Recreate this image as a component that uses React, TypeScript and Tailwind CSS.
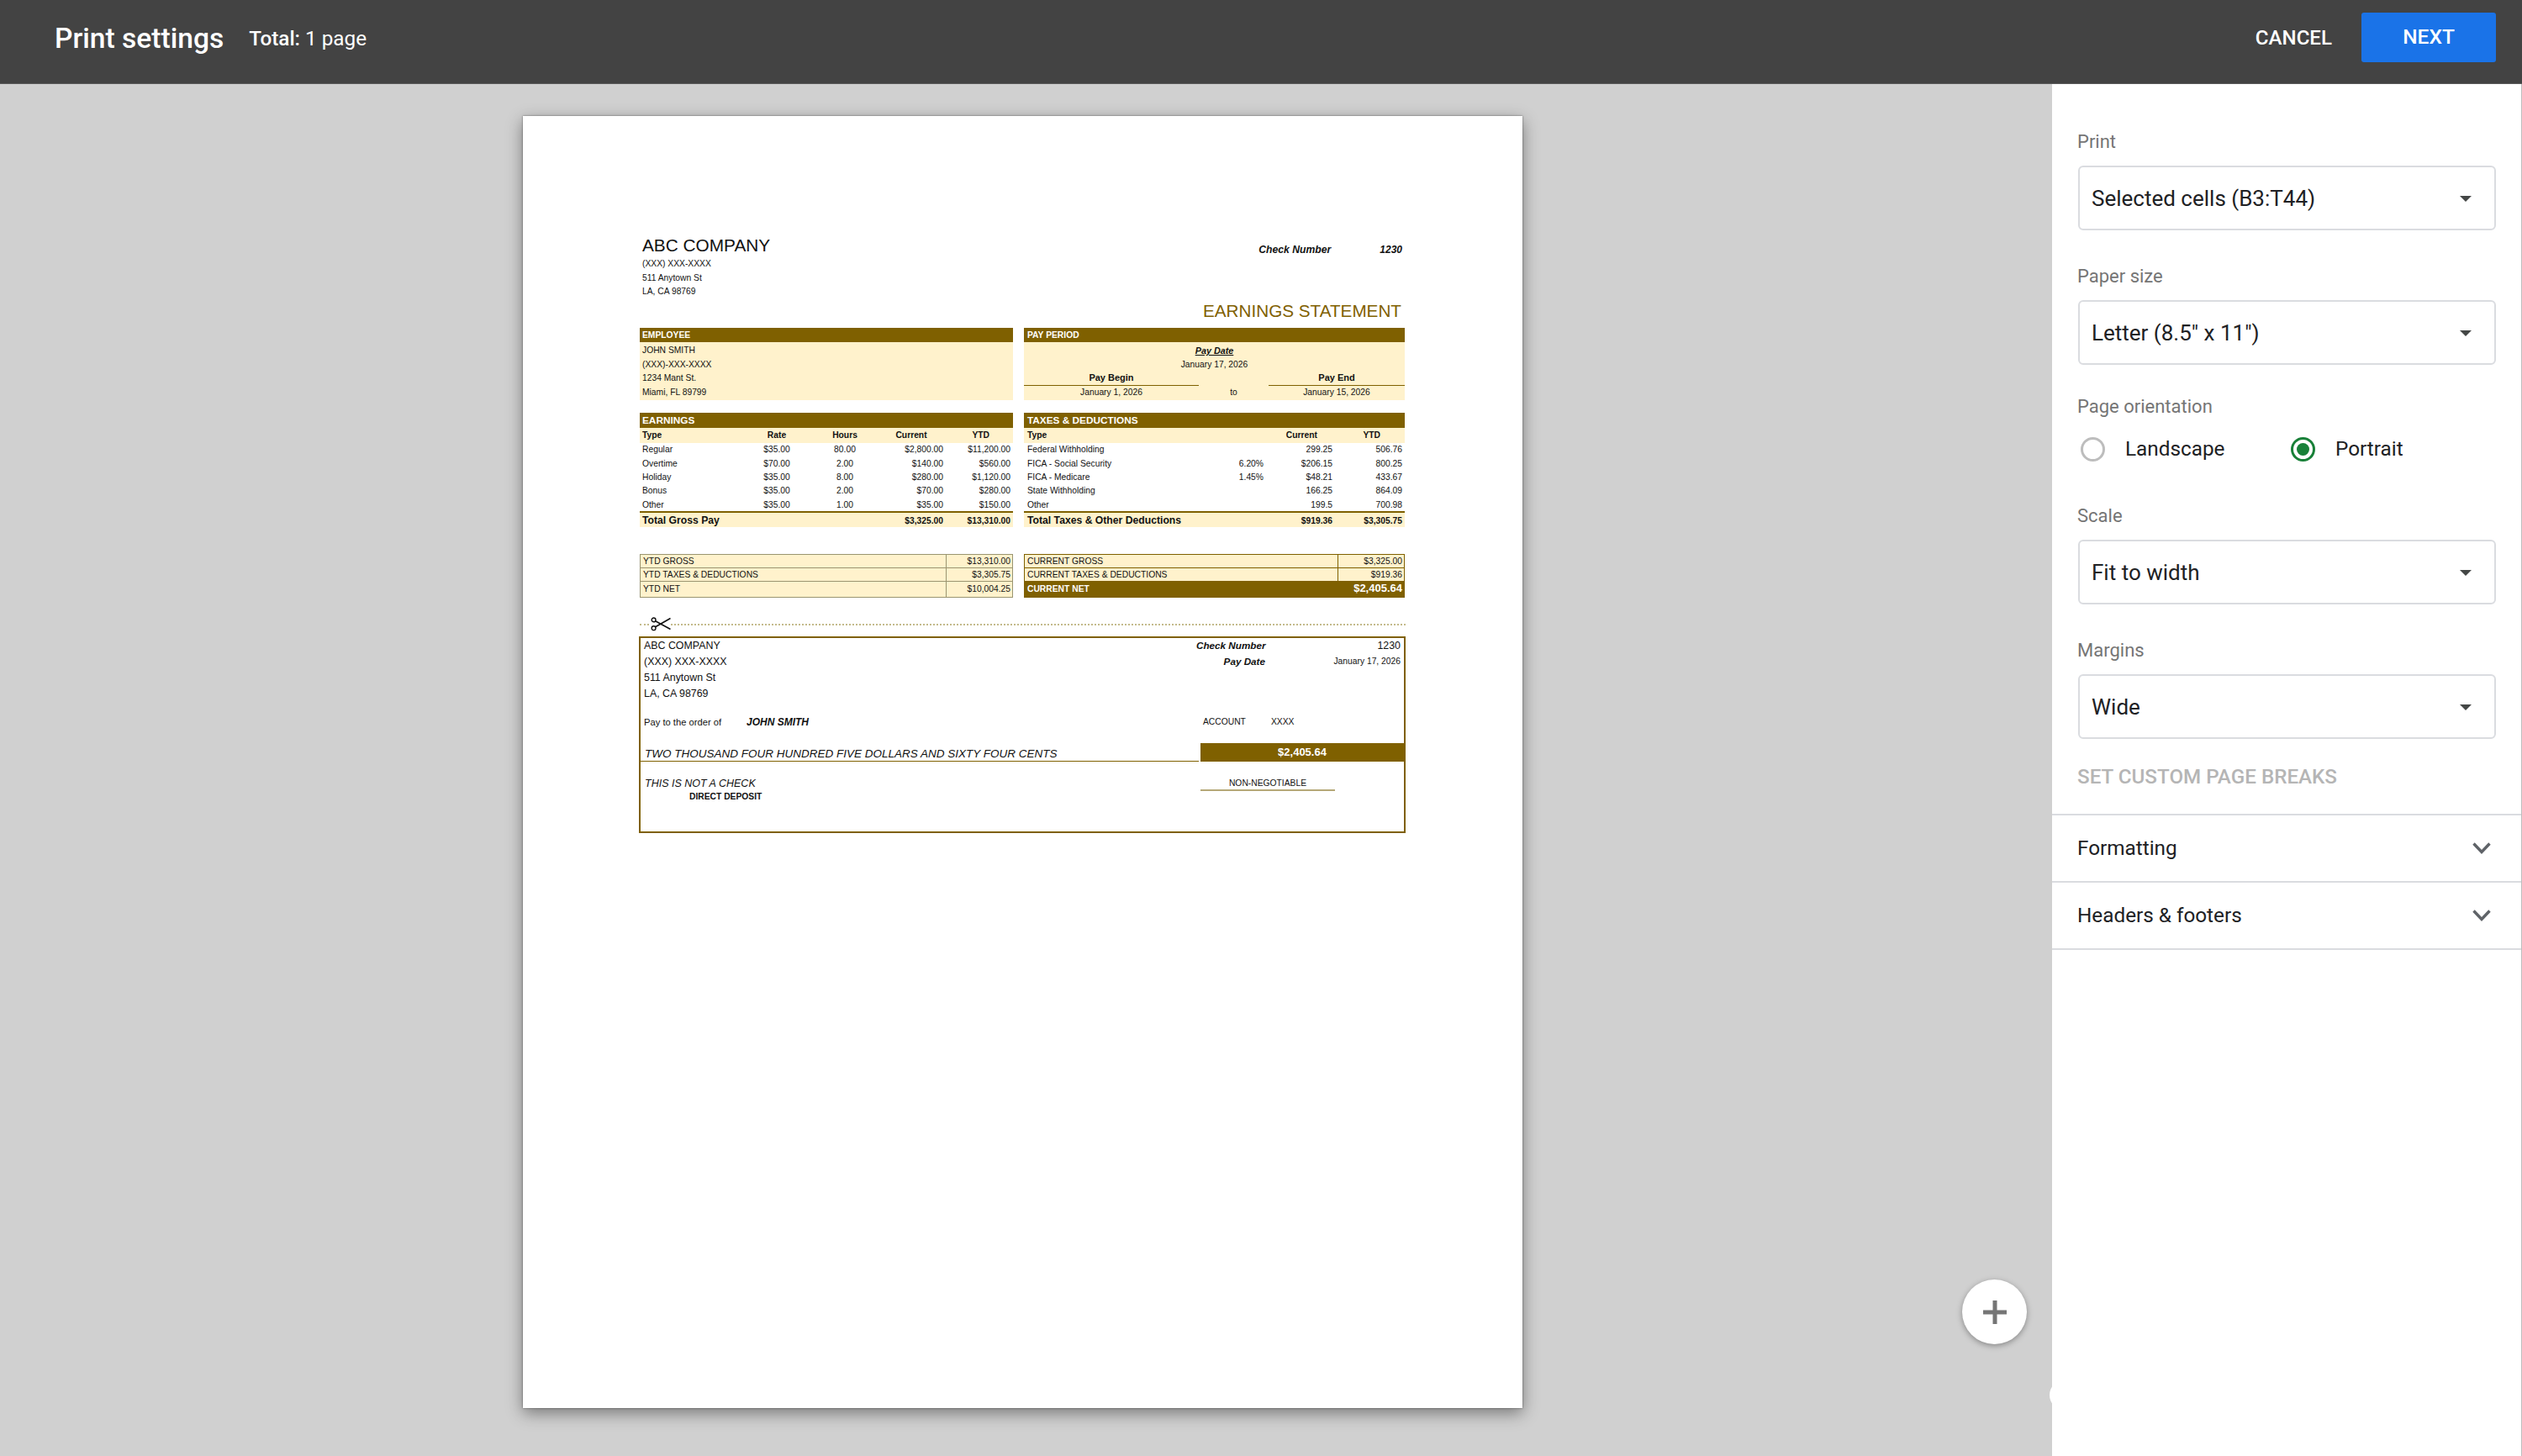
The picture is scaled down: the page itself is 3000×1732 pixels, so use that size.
const BROWN = "bg-[#7f6000]";
const CREAM = "bg-[#fff2cc]";

const earnings = [
  ["Regular", "$35.00", "80.00", "$2,800.00", "$11,200.00"],
  ["Overtime", "$70.00", "2.00", "$140.00", "$560.00"],
  ["Holiday", "$35.00", "8.00", "$280.00", "$1,120.00"],
  ["Bonus", "$35.00", "2.00", "$70.00", "$280.00"],
  ["Other", "$35.00", "1.00", "$35.00", "$150.00"],
];

const taxes = [
  ["Federal Withholding", "", "299.25", "506.76"],
  ["FICA - Social Security", "6.20%", "$206.15", "800.25"],
  ["FICA - Medicare", "1.45%", "$48.21", "433.67"],
  ["State Withholding", "", "166.25", "864.09"],
  ["Other", "", "199.5", "700.98"],
];

function Caret() {
  return (
    <svg width="14" height="7" viewBox="0 0 14 7" className="shrink-0">
      <path d="M0 0h14L7 7z" fill="#444746" />
    </svg>
  );
}

function Field({ label, value, className }: { label: string; value: string; className: string }) {
  return (
    <div className={className}>
      <div className="-ml-px text-[22px] leading-[30px] text-[#757575]">{label}</div>
      <div className="mt-[13px] flex h-[77px] items-center justify-between rounded-[6px] border-2 border-[#dadce0] pl-[14px] pr-[27px] pt-[1px] text-[26px] text-[#202124]">
        <span>{value}</span>
        <Caret />
      </div>
    </div>
  );
}

function Acordeon({ label }: { label: string }) {
  return (
    <div className="flex h-[80px] items-center justify-between border-b-2 border-[#dadce0] pl-[30px] pr-[36px] text-[24.3px] text-[#202124]">
      <span>{label}</span>
      <svg width="22" height="14" viewBox="0 0 22 14" fill="none" stroke="#5f6368" strokeWidth="3.4">
        <path d="M1.5 1.5 11 11.5l9.5-10" />
      </svg>
    </div>
  );
}

function Sidebar() {
  return (
    <aside className="relative z-10 w-[559px] shrink-0 border-r border-[#bdbdbd] bg-white font-['Roboto',sans-serif]">
      <div className="pl-[31px] pr-[30px]">
        <Field className="pt-[54px]" label="Print" value="Selected cells (B3:T44)" />
        <Field className="pt-[40px]" label="Paper size" value="Letter (8.5&quot; x 11&quot;)" />
        <div className="pt-[35px]">
          <div className="-ml-px text-[22px] leading-[30px] text-[#757575]">Page orientation</div>
          <div className="mt-[18px] flex h-[34px] items-center text-[24.3px] text-[#202124]">
            <span className="ml-[3px] h-[29px] w-[29px] rounded-full border-[3px] border-[#bdbdbd]" />
            <span className="ml-[24px] w-[197px]">Landscape</span>
            <span className="flex h-[29px] w-[29px] items-center justify-center rounded-full border-[3px] border-[#188038]">
              <span className="h-[15px] w-[15px] rounded-full bg-[#188038]" />
            </span>
            <span className="ml-[24px]">Portrait</span>
          </div>
        </div>
        <Field className="pt-[48px]" label="Scale" value="Fit to width" />
        <Field className="pt-[40px]" label="Margins" value="Wide" />
        <div className="-ml-px mt-[30px] text-[24.2px] font-medium leading-[30px] text-[#b5b5b5]">SET CUSTOM PAGE BREAKS</div>
      </div>
      <div className="mt-[29px] border-t-2 border-[#dadce0]">
        <Acordeon label="Formatting" />
        <Acordeon label="Headers & footers" />
      </div>
      <div className="absolute left-[-3px] top-[1541px] -z-10 h-[37px] w-[37px] rounded-full bg-white" />
    </aside>
  );
}

function Employee() {
  return (
    <div className="flex gap-[13px]">
      <div className={`w-[444px] ${CREAM} h-[86px]`}>
        <div className={`${BROWN} h-[17px] pl-[3px] text-[10.3px] font-bold leading-[18px] text-white`}>EMPLOYEE</div>
        <div className="pl-[3px] pt-[2px] text-[10.3px] leading-[16.6px] text-[#111]">
          <div>JOHN SMITH</div>
          <div>(XXX)-XXX-XXXX</div>
          <div>1234 Mant St.</div>
          <div>Miami, FL 89799</div>
        </div>
      </div>
      <div className={`w-[453px] ${CREAM} h-[86px] text-[10.3px] text-[#111]`}>
        <div className={`${BROWN} h-[17px] pl-[4px] font-bold leading-[18px] text-white`}>PAY PERIOD</div>
        <div className="pt-[2px] text-center leading-[16.6px]">
          <div className="text-[10.8px] font-bold italic underline">Pay Date</div>
          <div>January 17, 2026</div>
        </div>
        <div className="grid grid-cols-[208px_83px_162px] text-center">
          <div className="h-[17px] border-b border-[#7f6000] text-[11px] font-bold leading-[15px]">Pay Begin</div>
          <div />
          <div className="h-[17px] border-b border-[#7f6000] text-[11px] font-bold leading-[15px]">Pay End</div>
          <div className="leading-[16px]">January 1, 2026</div>
          <div className="leading-[16px]">to</div>
          <div className="leading-[16px]">January 15, 2026</div>
        </div>
      </div>
    </div>
  );
}

function Earnings() {
  const grid = "grid grid-cols-[120px_80px_82px_76px_80px] pl-[3px] pr-[3px]";
  return (
    <div className="w-[444px] text-[10.3px] text-[#111]">
      <div className={`${BROWN} h-[18px] pl-[3px] text-[11.8px] font-bold leading-[18px] text-white`}>EARNINGS</div>
      <div className={`${grid} ${CREAM} h-[18px] items-center font-bold`}>
        <span>Type</span>
        <span className="text-center">Rate</span>
        <span className="text-center">Hours</span>
        <span className="text-center">Current</span>
        <span className="pr-[25px] text-right">YTD</span>
      </div>
      {earnings.map((r) => (
        <div key={r[0]} className={`${grid} h-[16.3px] items-center`}>
          <span>{r[0]}</span>
          <span className="text-center">{r[1]}</span>
          <span className="text-center">{r[2]}</span>
          <span className="text-right">{r[3]}</span>
          <span className="text-right">{r[4]}</span>
        </div>
      ))}
      <div className={`${grid} ${CREAM} h-[19px] items-center border-t-2 border-[#7f6000]`}>
        <span className="col-span-3 text-[12.2px] font-bold">Total Gross Pay</span>
        <span className="text-right font-bold">$3,325.00</span>
        <span className="text-right font-bold">$13,310.00</span>
      </div>
    </div>
  );
}

function Taxes() {
  const grid = "grid grid-cols-[211px_70px_82px_83px] pl-[4px] pr-[3px]";
  return (
    <div className="w-[453px] text-[10.3px] text-[#111]">
      <div className={`${BROWN} h-[18px] pl-[4px] text-[11.8px] font-bold leading-[18px] text-white`}>TAXES &amp; DEDUCTIONS</div>
      <div className={`${grid} ${CREAM} h-[18px] items-center font-bold`}>
        <span className="col-span-2">Type</span>
        <span className="pr-[18px] text-right">Current</span>
        <span className="pr-[26px] text-right">YTD</span>
      </div>
      {taxes.map((r) => (
        <div key={r[0]} className={`${grid} h-[16.3px] items-center`}>
          <span className="whitespace-nowrap">{r[0]}</span>
          <span className="text-right">{r[1]}</span>
          <span className="text-right">{r[2]}</span>
          <span className="text-right">{r[3]}</span>
        </div>
      ))}
      <div className={`${grid} ${CREAM} h-[19px] items-center border-t-2 border-[#7f6000]`}>
        <span className="col-span-2 text-[12.2px] font-bold">Total Taxes &amp; Other Deductions</span>
        <span className="text-right font-bold">$919.36</span>
        <span className="text-right font-bold">$3,305.75</span>
      </div>
    </div>
  );
}

function Paper() {
  return (
    <div className="h-[1537px] w-[1189px] bg-white pl-[139px] pt-[142px] font-['Liberation_Sans','Arial',sans-serif] shadow-[0_6px_18px_rgba(0,0,0,0.42),0_0_2px_rgba(0,0,0,0.5)]">
      <div className="w-[911px]">
        <div className="flex items-start justify-between pl-[3px]">
          <div>
            <div className="text-[20.8px] leading-[24px] text-[#111]">ABC COMPANY</div>
            <div className="pt-[2px] text-[10.3px] leading-[16.5px] text-[#111]">
              <div>(XXX) XXX-XXXX</div>
              <div>511 Anytown St</div>
              <div>LA, CA 98769</div>
            </div>
          </div>
          <div className="flex pr-[4px] pt-[10px] text-[12.2px] font-bold italic leading-[14px] text-[#111]">
            <span className="w-[144px]">Check Number</span>
            <span className="text-[12px]">1230</span>
          </div>
        </div>
        <div className="pr-[5px] pt-[2px] text-right text-[20.7px] leading-[24px] text-[#7f6000]">EARNINGS STATEMENT</div>
        <div className="pt-[8.5px]">
          <Employee />
        </div>
        <div className="flex gap-[13px] pt-[15px]">
          <Earnings />
          <Taxes />
        </div>
        <div className="flex gap-[13px] pt-[32px] text-[10.3px] text-[#111]">
          <div className={`grid w-[444px] grid-cols-[1fr_78px] ${CREAM} border border-[#9a9570]`}>
            <span className="h-[16px] border-b border-r border-[#9a9570] pl-[3px] leading-[16px]">YTD GROSS</span>
            <span className="h-[16px] border-b border-[#9a9570] pr-[2px] text-right leading-[16px]">$13,310.00</span>
            <span className="h-[16px] border-b border-r border-[#9a9570] pl-[3px] leading-[16px]">YTD TAXES &amp; DEDUCTIONS</span>
            <span className="h-[16px] border-b border-[#9a9570] pr-[2px] text-right leading-[16px]">$3,305.75</span>
            <span className="h-[18px] border-r border-[#9a9570] pl-[3px] leading-[18px]">YTD NET</span>
            <span className="h-[18px] pr-[2px] text-right leading-[18px]">$10,004.25</span>
          </div>
          <div className={`grid w-[453px] grid-cols-[1fr_78px] ${CREAM} border border-[#7f6000]`}>
            <span className="h-[16px] border-b border-r border-[#7f6000] pl-[3px] leading-[16px]">CURRENT GROSS</span>
            <span className="h-[16px] border-b border-[#7f6000] pr-[2px] text-right leading-[16px]">$3,325.00</span>
            <span className="h-[16px] border-b border-r border-[#7f6000] pl-[3px] leading-[16px]">CURRENT TAXES &amp; DEDUCTIONS</span>
            <span className="h-[16px] border-b border-[#7f6000] pr-[2px] text-right leading-[16px]">$919.36</span>
            <span className={`${BROWN} h-[18px] pl-[3px] font-bold leading-[18px] text-white`}>CURRENT NET</span>
            <span className={`${BROWN} h-[18px] pr-[2px] text-right text-[13px] font-bold leading-[16px] text-white`}>$2,405.64</span>
          </div>
        </div>
        <div className="relative mt-[31px] border-t-2 border-dotted border-[#c4bb8c]">
          <svg width="24" height="17" viewBox="0 0 24 17" fill="none" stroke="#111" className="absolute left-[13px] top-[-10px] bg-white">
            <circle cx="3.6" cy="3.4" r="2.4" strokeWidth="1.4" />
            <circle cx="3.6" cy="13.2" r="2.4" strokeWidth="1.4" />
            <path d="M5.6 4.8 23.5 14.5M5.6 11.8 23.5 1.5" strokeWidth="1.6" />
          </svg>
        </div>
        <div className="-ml-px mt-[13px] h-[234px] w-[912px] border-2 border-[#7f6000] text-[#111]">
          <div className="flex justify-between px-[4px]">
            <div className="text-[12.4px] leading-[18.7px]">
              <div>ABC COMPANY</div>
              <div>(XXX) XXX-XXXX</div>
              <div>511 Anytown St</div>
              <div>LA, CA 98769</div>
            </div>
            <div className="grid grid-cols-[82px_161px] content-start leading-[18.7px]">
              <span className="whitespace-nowrap text-right text-[11.7px] font-bold italic">Check Number</span>
              <span className="text-right text-[12.4px]">1230</span>
              <span className="text-right text-[11.7px] font-bold italic">Pay Date</span>
              <span className="text-right text-[10.3px]">January 17, 2026</span>
            </div>
          </div>
          <div className="flex pt-[17px] text-[10.3px] leading-[16px]">
            <div className="flex w-[664px] pl-[4px]">
              <span className="w-[122px] text-[11.2px]">Pay to the order of</span>
              <span className="text-[12px] font-bold italic">JOHN SMITH</span>
            </div>
            <div className="pl-[5px]">
              <span className="inline-block w-[81px]">ACCOUNT</span>
              <span>XXXX</span>
            </div>
          </div>
          <div className="flex items-start pt-[17px]">
            <div className="h-[22px] w-[664px] border-b border-[#7f6000] pl-[5px] text-[13.5px] italic leading-[25px]">TWO THOUSAND FOUR HUNDRED FIVE DOLLARS AND SIXTY FOUR CENTS</div>
            <div className={`${BROWN} ml-[2px] h-[22px] flex-1 text-center text-[13px] font-bold leading-[22px] text-white`}>$2,405.64</div>
          </div>
          <div className="flex pt-[18px]">
            <div className="w-[666px] pl-[5px]">
              <div className="text-[12.5px] italic leading-[16px]">THIS IS NOT A CHECK</div>
              <div className="pl-[53px] text-[10.3px] font-bold leading-[16px]">DIRECT DEPOSIT</div>
            </div>
            <div className="h-[17px] w-[160px] border-b-2 border-[#b5a878] text-center text-[10.3px] leading-[16px]">NON-NEGOTIABLE</div>
          </div>
        </div>
      </div>
    </div>
  );
}

export default function App() {
  return (
    <div className="flex h-[1732px] w-[3000px] flex-col overflow-hidden bg-[#d0d0d0] font-['Roboto',sans-serif]">
      <header className="flex h-[100px] shrink-0 items-center justify-between border-b border-[#5a5a5a] bg-[#434343] pl-[65px] pr-[31px] text-white">
        <div className="flex items-center pb-[7px]">
          <span className="text-[33.6px] font-medium">Print settings</span>
          <span className="ml-[30px] text-[24.3px]">
            <b className="font-medium">Total:</b> 1 page
          </span>
        </div>
        <div className="flex items-center pb-[11px]">
          <button className="relative top-px text-[24.1px] font-medium">CANCEL</button>
          <button className="ml-[35px] h-[59px] w-[160px] rounded-[3px] bg-[#1a73e8] text-[24.5px] font-medium">NEXT</button>
        </div>
      </header>
      <div className="flex min-h-0 flex-1">
        <main className="relative flex-1 pl-[622px] pt-[38px]">
          <Paper />
          <button className="absolute left-[2334px] top-[1422px] z-20 flex h-[77px] w-[77px] items-center justify-center rounded-full bg-white shadow-[0_2px_7px_rgba(0,0,0,0.35)]">
            <svg width="28" height="28" viewBox="0 0 28 28" fill="#757575">
              <path d="M11.5 0h5v11.5H28v5H16.5V28h-5V16.5H0v-5h11.5z" />
            </svg>
          </button>
        </main>
        <Sidebar />
      </div>
    </div>
  );
}
